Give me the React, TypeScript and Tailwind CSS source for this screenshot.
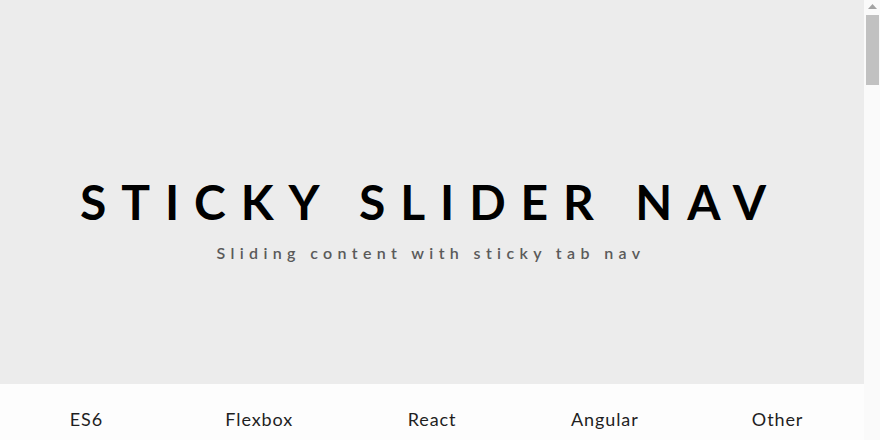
const tabs = ["ES6", "Flexbox", "React", "Angular", "Other"];

function Scrollbar() {
  return (
    <div className="w-4 shrink-0 bg-[#fafafa] flex flex-col">
      <div className="h-[15px] flex items-center justify-center">
        <svg width="9" height="6" viewBox="0 0 9 6" className="-mt-[2px]">
          <path d="M4.5 0 L9 5 L0 5 Z" fill="#a3a3a3" />
        </svg>
      </div>
      <div className="ml-[2px] w-[13px] h-[70px] bg-[#c1c1c1]" />
    </div>
  );
}

export default function App() {
  return (
    <div className="flex h-[440px] w-full overflow-hidden bg-white font-['Lato',sans-serif]">
      <div className="flex-1 flex flex-col">
        <header className="h-[384px] shrink-0 bg-[#ececec] flex flex-col items-center pt-[178px]">
          <h1 className="text-[48px] leading-[48px] font-bold tracking-[0.31em] text-black -ml-[3px]">
            STICKY SLIDER NAV
          </h1>
          <p className="mt-[19px] text-[16px] leading-[16px] font-semibold tracking-[0.335em] text-[#5a5a5a] -ml-[2px]">
            Sliding content with sticky tab nav
          </p>
        </header>
        <nav className="h-[70px] shrink-0 bg-[#fdfdfd] flex">
          {tabs.map((t) => (
            <a
              key={t}
              href="#"
              className="flex-1 flex items-center justify-center text-[18px] tracking-[0.05em] text-[#1f1f1f]"
            >
              {t}
            </a>
          ))}
        </nav>
      </div>
      <Scrollbar />
    </div>
  );
}
